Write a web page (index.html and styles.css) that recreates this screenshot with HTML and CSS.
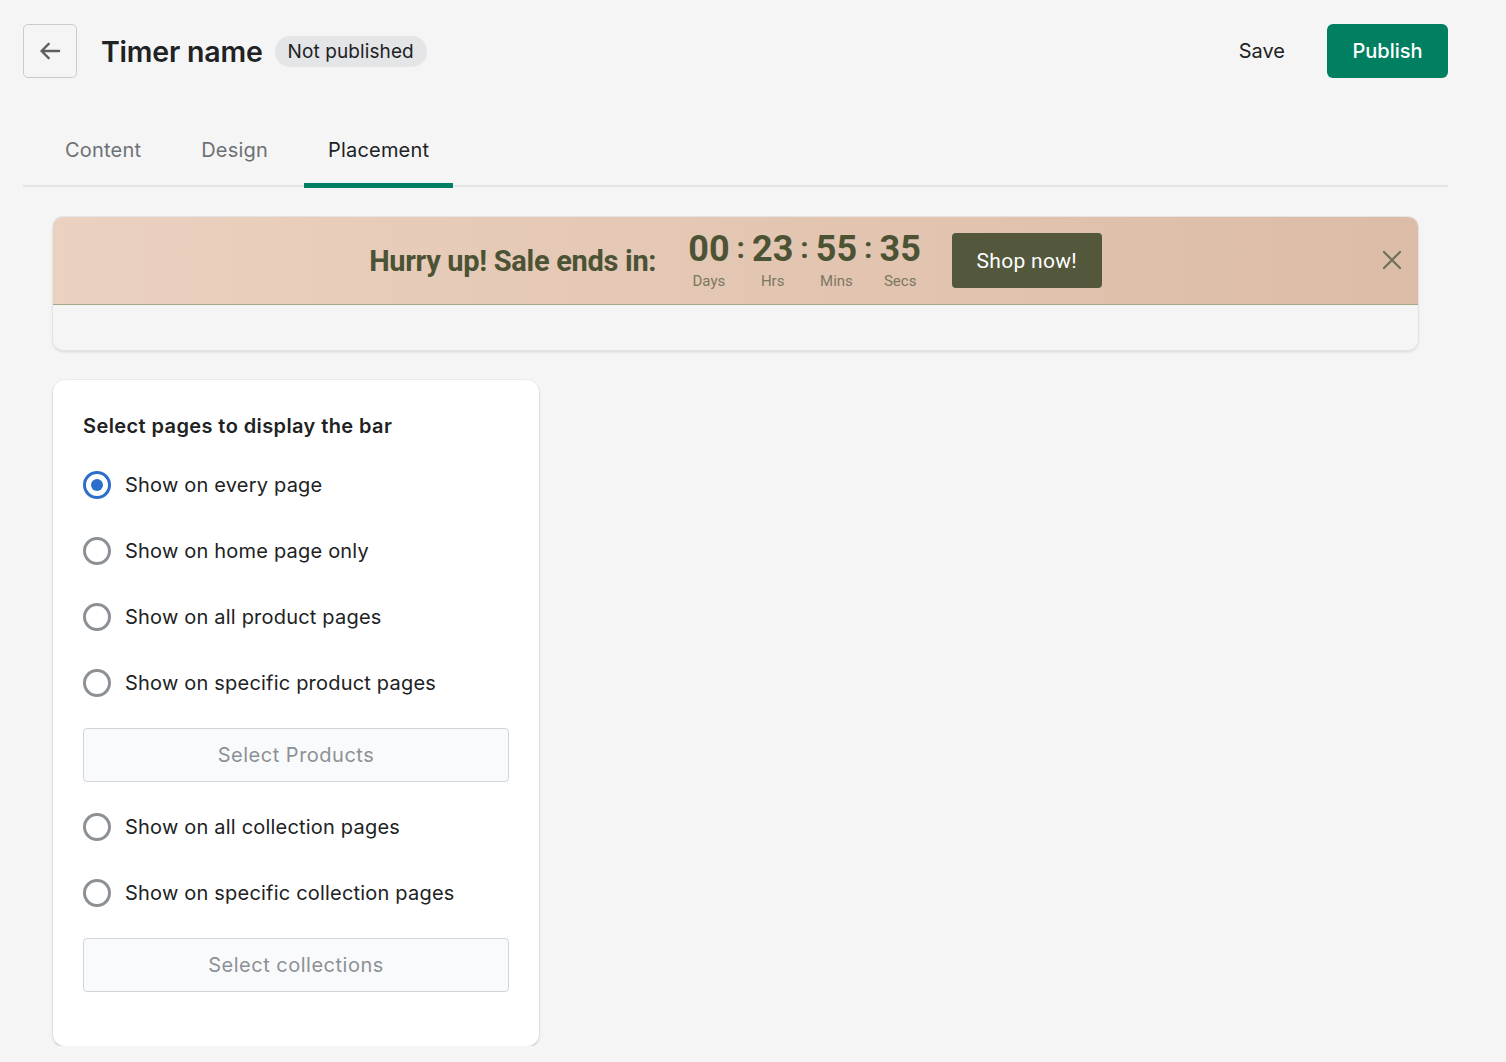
FILE: index.html
```html
<!DOCTYPE html>
<html lang="en">
<head>
    <meta charset="UTF-8">
    <title>Timer name - Placement</title>
    <link rel="stylesheet" href="styles.css">
</head>
<body>
    <div class="page">
        <header class="topbar">
            <div class="title-group">
                <button class="back-btn" aria-label="Back">
                    <svg width="26" height="26" viewBox="0 0 20 20"><path d="M17 10H3.5M9 4.5 3.5 10 9 15.5" fill="none" stroke="#5c5f62" stroke-width="1.8" stroke-linecap="round" stroke-linejoin="round"/></svg>
                </button>
                <h1>Timer name</h1>
                <span class="badge">Not published</span>
            </div>
            <div class="actions">
                <button class="save-btn">Save</button>
                <button class="publish-btn">Publish</button>
            </div>
        </header>

        <nav class="tabs">
            <a href="#" class="tab">Content</a>
            <a href="#" class="tab">Design</a>
            <a href="#" class="tab active">Placement</a>
        </nav>

        <section class="preview">
            <div class="sale-bar">
                <div class="sale-inner">
                    <span class="sale-title">Hurry up! Sale ends in:</span>
                    <div class="countdown">
                        <div class="unit"><span class="num">00</span><span class="label">Days</span></div>
                        <span class="colon">:</span>
                        <div class="unit"><span class="num">23</span><span class="label">Hrs</span></div>
                        <span class="colon">:</span>
                        <div class="unit"><span class="num">55</span><span class="label">Mins</span></div>
                        <span class="colon">:</span>
                        <div class="unit"><span class="num">35</span><span class="label">Secs</span></div>
                    </div>
                    <button class="shop-btn">Shop now!</button>
                </div>
                <button class="close-btn" aria-label="Close">
                    <svg width="20" height="20" viewBox="0 0 20 20"><path d="M2 2 18 18M18 2 2 18" stroke="#6b7258" stroke-width="2.2" stroke-linecap="round"/></svg>
                </button>
            </div>
            <div class="preview-foot"></div>
        </section>

        <section class="card">
            <h2>Select pages to display the bar</h2>
            <div class="options">
                <label class="option"><input type="radio" name="placement" checked><span class="radio"></span>Show on every page</label>
                <label class="option"><input type="radio" name="placement"><span class="radio"></span>Show on home page only</label>
                <label class="option"><input type="radio" name="placement"><span class="radio"></span>Show on all product pages</label>
                <label class="option"><input type="radio" name="placement"><span class="radio"></span>Show on specific product pages</label>
                <button class="select-btn" disabled>Select Products</button>
                <label class="option"><input type="radio" name="placement"><span class="radio"></span>Show on all collection pages</label>
                <label class="option"><input type="radio" name="placement"><span class="radio"></span>Show on specific collection pages</label>
                <button class="select-btn" disabled>Select collections</button>
            </div>
        </section>
    </div>
</body>
</html>
```

FILE: styles.css
```css
* {
    margin: 0;
    padding: 0;
    box-sizing: border-box;
}

body {
    background-color: #f5f5f5;
    color: #202223;
    font-family: Inter, 'Noto Sans', sans-serif;
}

button {
    font-family: inherit;
}

.page {
    width: 1425px;
    margin-left: 23px;
    padding-top: 24px;
}

.topbar {
    display: flex;
    justify-content: space-between;
    align-items: center;
}

.title-group {
    display: flex;
    align-items: center;
}

.back-btn {
    width: 54px;
    height: 54px;
    border: 1px solid #c9cccf;
    border-radius: 5px;
    background: transparent;
    display: flex;
    align-items: center;
    justify-content: center;
    margin-right: 24px;
}

.title-group h1 {
    font-size: 28.5px;
    font-weight: 600;
    letter-spacing: -0.2px;
    margin-right: 12px;
}

.badge {
    background-color: #e4e5e7;
    border-radius: 15px;
    padding: 4px 13px;
    font-size: 19px;
    color: #202223;
    letter-spacing: 0.1px;
}

.actions {
    display: flex;
    align-items: center;
}

.save-btn {
    background: none;
    border: none;
    font-size: 20px;
    color: #202223;
    margin-right: 42px;
}

.publish-btn {
    width: 121px;
    height: 54px;
    background-color: #008060;
    border: none;
    border-radius: 6px;
    color: white;
    font-size: 20px;
    font-weight: 500;
}

.tabs {
    display: flex;
    gap: 12px;
    margin-top: 27px;
    padding-left: 18px;
    border-bottom: 2px solid #e1e3e5;
}

.tab {
    text-decoration: none;
    color: #6d7175;
    font-size: 20px;
    letter-spacing: 0.2px;
    padding: 33px 24px 21px;
    border-bottom: 5px solid transparent;
    margin-bottom: -3px;
    border-radius: 3px 3px 0 0;
}

.tab.active {
    color: #202223;
    border-bottom-color: #008060;
}

.preview {
    margin: 30px 30px 0;
    border-radius: 10px;
    overflow: hidden;
    box-shadow: 0 0 0 1px #e4e4e4, 0 2px 3px rgba(0, 0, 0, 0.12);
}

.sale-bar {
    height: 88px;
    background: linear-gradient(to right, #ebd1c0, #dcbca6);
    border-bottom: 1px solid #a6a688;
    position: relative;
    display: flex;
    justify-content: center;
    align-items: center;
}

.sale-inner {
    display: flex;
    align-items: center;
}

.sale-title {
    font-family: Roboto, sans-serif;
    font-size: 29px;
    font-weight: 700;
    color: #4c5335;
    letter-spacing: -0.3px;
    margin-right: 32px;
}

.countdown {
    display: flex;
    align-items: flex-start;
    color: #4c5335;
    font-family: Roboto, sans-serif;
}

.unit {
    display: flex;
    flex-direction: column;
    align-items: center;
}

.num {
    font-size: 36px;
    font-weight: 700;
    line-height: 36px;
}

.label {
    font-size: 15px;
    color: #7b7762;
    margin-top: 5px;
}

.colon {
    font-size: 30px;
    font-weight: 700;
    line-height: 34px;
    margin: 0 7px;
}

.shop-btn {
    margin-left: 31px;
    width: 150px;
    height: 55px;
    background-color: #53573b;
    border: none;
    border-radius: 4px;
    color: white;
    font-family: Roboto, sans-serif;
    font-size: 21px;
    letter-spacing: 0.3px;
}

.close-btn {
    position: absolute;
    right: 16px;
    top: 33px;
    background: none;
    border: none;
    width: 20px;
    height: 20px;
}

.preview-foot {
    height: 45px;
    background-color: #f5f5f5;
}

.card {
    width: 486px;
    margin: 30px 0 0 30px;
    background: white;
    border-radius: 12px;
    box-shadow: 0 0 0 1px rgba(0, 0, 0, 0.04), 0 2px 3px rgba(0, 0, 0, 0.12);
    padding: 34px 30px 42px;
}

.card h2 {
    font-size: 20px;
    font-weight: 600;
    letter-spacing: 0.4px;
    margin-bottom: 14px;
}

.options {
    display: flex;
    flex-direction: column;
}

.option {
    display: flex;
    align-items: center;
    height: 66px;
    font-size: 20px;
    letter-spacing: 0.2px;
    cursor: pointer;
}

.option input {
    display: none;
}

.radio {
    width: 28px;
    height: 28px;
    border: 3px solid #8c9196;
    border-radius: 50%;
    margin-right: 14px;
    display: flex;
    align-items: center;
    justify-content: center;
}

.option input:checked + .radio {
    border-color: #2c6ecb;
}

.option input:checked + .radio::after {
    content: "";
    width: 12px;
    height: 12px;
    border-radius: 50%;
    background-color: #2c6ecb;
}

.select-btn {
    height: 54px;
    margin: 12px 0 12px;
    background-color: #f9fafb;
    border: 1px solid #d2d5d8;
    border-radius: 4px;
    color: #8c9196;
    font-size: 20px;
    letter-spacing: 0.5px;
}
```
